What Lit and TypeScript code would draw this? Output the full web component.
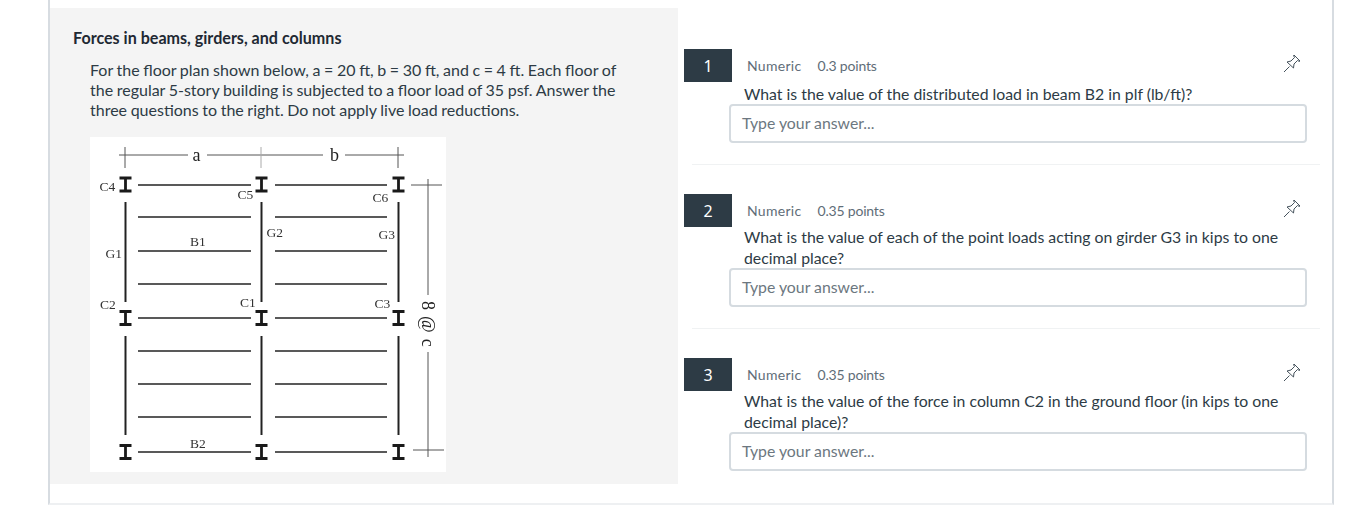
import { LitElement, html, css, svg } from "lit";
import { customElement } from "lit/decorators.js";

const questions = [
  { n: 1, pts: "0.3 points", text: "What is the value of the distributed load in beam B2 in plf (lb/ft)?" },
  { n: 2, pts: "0.35 points", text: "What is the value of each of the point loads acting on girder G3 in kips to one decimal place?" },
  { n: 3, pts: "0.35 points", text: "What is the value of the force in column C2 in the ground floor (in kips to one decimal place)?" },
];

const OX = 90, OY = 137;
const beamRows = [185, 217, 251, 284, 318, 351, 384, 417, 452];
const cols = [125.5, 261.5, 398.5];
const ibeamRows = [184.5, 318, 452];
const labels: [string, number, number][] = [
  ["C4", 99.5, 191], ["C5", 237.5, 199], ["C6", 372.5, 201.5], ["B1", 190, 245.5], ["G1", 105.5, 258],
  ["G2", 266.5, 237], ["G3", 378.5, 239], ["C2", 100, 309], ["C1", 240, 307], ["C3", 374.5, 308], ["B2", 190, 448],
];

function line(x1: number, y1: number, x2: number, y2: number, cls: string) {
  return svg`<line class=${cls} x1=${x1 - OX} y1=${y1 - OY} x2=${x2 - OX} y2=${y2 - OY}></line>`;
}

function ibeam(cx: number, cy: number) {
  const x = cx - OX, y = cy - OY;
  return svg`<path class="ibeam" d="M${x - 6} ${y - 6.5}H${x + 6}M${x - 6} ${y + 6.5}H${x + 6}M${x} ${y - 6.5}V${y + 6.5}"></path>`;
}

const diagram = svg`
  ${line(119, 155, 188, 155, "thin")}${line(207, 155, 323, 155, "thin")}${line(345, 155, 404, 155, "thin")}
  ${line(125, 147, 125, 168, "thin")}${line(261, 147, 261, 168, "tick")}${line(398, 147, 398, 168, "thin")}
  ${line(411, 185, 442, 185, "thin")}${line(413, 450, 444, 450, "thin")}
  ${line(428, 179, 428, 295, "thin")}${line(428, 352, 428, 457, "thin")}
  ${beamRows.map((y) => svg`${line(138, y, 251, y, "beam")}${line(275, y, 387, y, "beam")}`)}
  ${cols.map((x) => svg`${line(x, 202, x, 302, "girder")}${line(x, 336, x, 435, "girder")}`)}
  ${cols.map((x) => ibeamRows.map((y) => ibeam(x, y)))}
  ${labels.map(([t, x, y]) => svg`<text class="lbl" x=${x - OX} y=${y - OY}>${t}</text>`)}
  <text class="dim" x=${192.5 - OX} y=${160.5 - OY}>a</text>
  <text class="dim" x=${330 - OX} y=${160.5 - OY}>b</text>
  <text class="dim side" transform="translate(${422 - OX} ${301 - OY}) rotate(90)">8 @ c</text>
`;

@customElement("app-root")
export class AppRoot extends LitElement {
  static styles = css`
    :host {
      display: block;
      width: 1353px;
      height: 506px;
      overflow: hidden;
      background: #fff;
      font-family: Lato, "Open Sans", sans-serif;
      color: #2d3b45;
    }
    .frame {
      box-sizing: border-box;
      margin-left: 48px;
      width: 1286px;
      height: 505px;
      border-left: 2px solid #d7dce1;
      border-right: 2px solid #d7dce1;
      border-bottom: 2px solid #eef0f2;
      padding-top: 8px;
      display: flex;
    }
    .left {
      box-sizing: border-box;
      width: 628px;
      height: 476px;
      background: #f4f4f4;
      padding: 20px 0 0 23px;
      flex: none;
    }
    .title {
      font-size: 16.1px;
      font-weight: 700;
      line-height: 20px;
      color: #1f2933;
    }
    .stem {
      margin: 12px 0 0 17px;
      width: 535px;
      font-size: 16px;
      word-spacing: -0.5px;
      line-height: 20px;
      color: #2d3b45;
    }
    .fig {
      display: block;
      margin: 17px 0 0 17px;
      background: #fff;
      filter: blur(0.35px);
    }
    .thin { stroke: #555; stroke-width: 1; }
    .tick { stroke: #aaa; stroke-width: 1; }
    .beam { stroke: #222; stroke-width: 1.5; }
    .girder { stroke: #222; stroke-width: 2; }
    .ibeam { stroke: #1a1a1a; stroke-width: 2.8; fill: none; }
    .lbl { font: 13.5px "Liberation Serif", serif; fill: #333; }
    .dim { font: 18px "Liberation Serif", serif; fill: #222; }
    .side { letter-spacing: 0.8px; }
    .right {
      flex: none;
      width: 636px;
      margin-left: 6px;
      display: flex;
      flex-direction: column;
      padding-top: 41px;
    }
    .q {
      display: grid;
      grid-template-columns: 48px 1fr;
      padding-bottom: 21px;
    }
    .q + .q {
      margin-top: 29px;
    }
    .q:not(:last-child)::after {
      content: "";
      grid-column: 1 / -1;
      height: 1px;
      background: #f0f2f3;
      margin: 21px 0 -21px 8px;
    }
    .num {
      height: 33px;
      background: #2d3b45;
      color: #fff;
      font: 16px/34px "Noto Sans", sans-serif;
      text-align: center;
    }
    .body {
      min-width: 0;
    }
    .meta {
      display: flex;
      align-items: center;
      margin-left: 15px;
      height: 33px;
      font-size: 14px;
      color: #5f6d78;
      gap: 16px;
    }
    .kind { letter-spacing: 0.3px; }
    .pts { letter-spacing: -0.2px; }
    .pin {
      margin-left: auto;
      margin-right: 15px;
      margin-top: -5px;
    }
    .pin path { fill: none; stroke: #45525c; stroke-width: 1; stroke-linejoin: round; }
    .text {
      margin: -1px 34px 0 12px;
      font-size: 15.8px;
      line-height: 21px;
      color: #2d3b45;
    }
    .q:first-child .text {
      margin-top: 1px;
    }
    .answer {
      box-sizing: border-box;
      margin: 0 0 0 -3px;
      width: 578px;
      height: 39px;
      border: 2px solid #d5dbe0;
      border-radius: 4px;
      padding: 0 11px;
      font: 15.8px/34px Lato, sans-serif;
      color: #6c7780;
      background: #fff;
    }
  `;

  render() {
    return html`<div class="frame">
      <section class="left">
        <div class="title">Forces in beams, girders, and columns</div>
        <div class="stem">For the floor plan shown below, a = 20 ft, b = 30 ft, and c = 4 ft. Each floor of the regular 5-story building is subjected to a floor load of 35 psf. Answer the three questions to the right. Do not apply live load reductions.</div>
        <svg class="fig" width="356" height="335" viewBox="0 0 356 335">${diagram}</svg>
      </section>
      <section class="right">
        ${questions.map(
          (q) => html`<article class="q">
            <div class="num">${q.n}</div>
            <div class="body">
              <div class="meta">
                <span class="kind">Numeric</span><span class="pts">${q.pts}</span>
                <svg class="pin" width="26" height="26" viewBox="0 0 26 26">
                  <path d="M5 22L10.5 16.5M8 12L12 11L15.5 7.5L14.5 5.5L15 5L21 11L20.5 11.5L18.5 10.5L15 14L14.5 18Z"></path>
                </svg>
              </div>
              <div class="text">${q.text}</div>
              <div class="answer">Type your answer...</div>
            </div>
          </article>`
        )}
      </section>
    </div>`;
  }
}
